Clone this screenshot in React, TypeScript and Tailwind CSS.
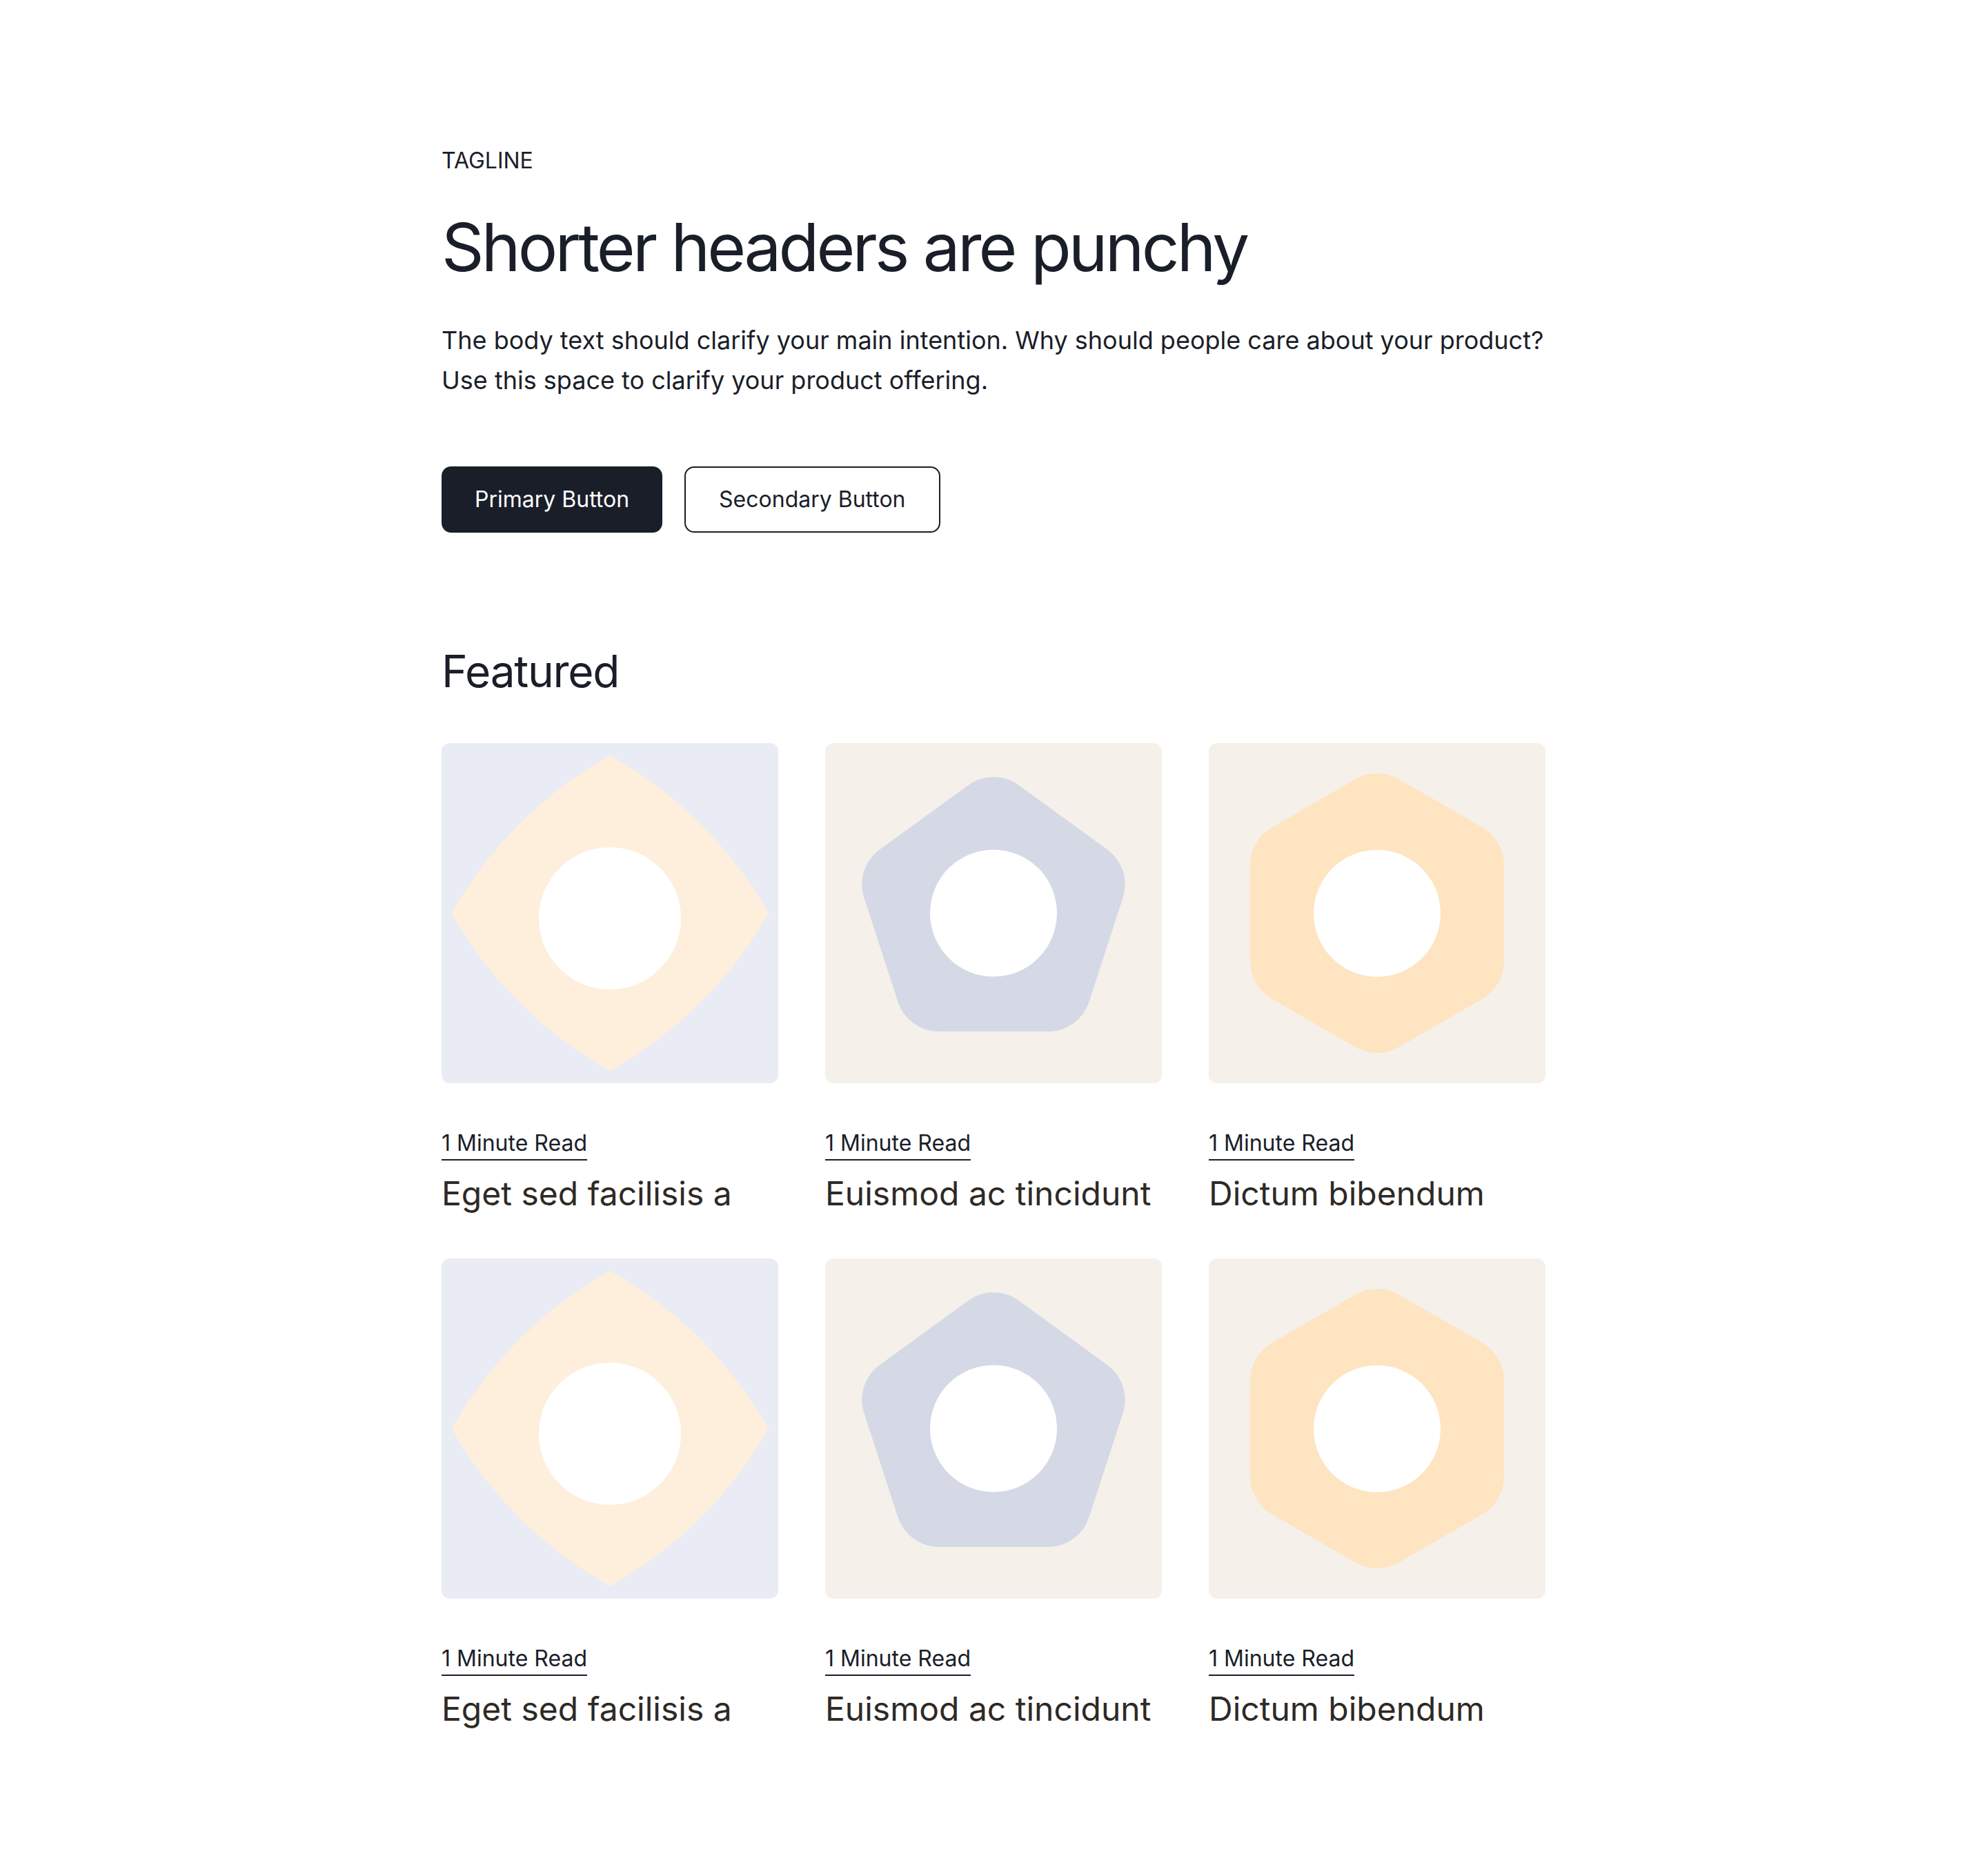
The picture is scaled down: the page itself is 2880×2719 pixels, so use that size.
import React from 'react';

type Pt = [number, number];

// rounded regular polygon, vertices clockwise from the top
function roundedPolygon(cx: number, cy: number, R: number, n: number, r: number) {
  const pts: Pt[] = Array.from({ length: n }, (_, i) => {
    const a = ((-90 + (i * 360) / n) * Math.PI) / 180;
    return [cx + R * Math.cos(a), cy + R * Math.sin(a)];
  });
  const half = (((n - 2) * 180) / n / 2) * (Math.PI / 180);
  const t = r / Math.tan(half);
  let d = '';
  pts.forEach((p, i) => {
    const prev = pts[(i - 1 + n) % n];
    const next = pts[(i + 1) % n];
    const toward = (q: Pt): Pt => {
      const dx = q[0] - p[0];
      const dy = q[1] - p[1];
      const len = Math.hypot(dx, dy);
      return [p[0] + (dx / len) * t, p[1] + (dy / len) * t];
    };
    const a = toward(prev);
    const b = toward(next);
    d += `${i === 0 ? 'M' : 'L'}${a[0].toFixed(2)} ${a[1].toFixed(2)} A${r} ${r} 0 0 1 ${b[0].toFixed(2)} ${b[1].toFixed(2)} `;
  });
  return d + 'Z';
}

const lensPath =
  'M244 18 A600 600 0 0 1 474 246.5 A600 600 0 0 1 244 475 A600 600 0 0 1 14.5 246.5 A600 600 0 0 1 244 18 Z';

function LensArt() {
  return (
    <div className="h-[493px] rounded-xl bg-[#e9ebf5] overflow-hidden">
      <svg viewBox="0 0 488 493" className="w-full h-full block">
        <path d={lensPath} fill="#feefdc" />
        <circle cx="244" cy="254" r="103" fill="#ffffff" />
      </svg>
    </div>
  );
}

function PentagonArt() {
  return (
    <div className="h-[493px] rounded-xl bg-[#f5f0ea] overflow-hidden">
      <svg viewBox="0 0 488 493" className="w-full h-full block">
        <path d={roundedPolygon(244, 246.4, 212, 5, 62)} fill="#d5d9e6" />
        <circle cx="244" cy="246.4" r="92" fill="#ffffff" />
      </svg>
    </div>
  );
}

function HexagonArt() {
  return (
    <div className="h-[493px] rounded-xl bg-[#f5f0ea] overflow-hidden">
      <svg viewBox="0 0 488 493" className="w-full h-full block">
        <path d={roundedPolygon(244, 246.5, 212.3, 6, 63)} fill="#fee4c0" />
        <circle cx="244" cy="246.8" r="92" fill="#ffffff" />
      </svg>
    </div>
  );
}

const posts = [
  { art: <LensArt />, title: 'Eget sed facilisis a' },
  { art: <PentagonArt />, title: 'Euismod ac tincidunt' },
  { art: <HexagonArt />, title: 'Dictum bibendum' },
];

function PostCard({ art, title }: { art: React.ReactNode; title: string }) {
  return (
    <div className="flex flex-col items-start">
      <div className="w-full">{art}</div>
      <span className="mt-[67px] pb-[3px] border-b-2 border-[#1a1e29] text-[32px] leading-[40px] text-[#1a1e29]">
        1 Minute Read
      </span>
      <h3 className="mt-[19px] text-[48px] leading-[58px] text-[#2e2a25]">{title}</h3>
    </div>
  );
}

export default function App() {
  return (
    <div className="bg-white font-['Inter','Noto_Sans',sans-serif] pt-[209px] pb-[212px]">
      <div className="w-[1600px] mx-auto">
        <p className="text-[32px] leading-[48px] text-[#1a1e29]">TAGLINE</p>
        <h1 className="mt-[44px] text-[96px] leading-[115px] tracking-[-0.04em] text-[#1a1e29]">
          Shorter headers are punchy
        </h1>
        <p className="mt-[49px] text-[36px] leading-[57.6px] text-[#1a1e29]">
          The body text should clarify your main intention. Why should people care about your product?
          <br />
          Use this space to clarify your product offering.
        </p>
        <div className="mt-[96px] flex gap-8">
          <button className="h-24 px-12 rounded-[14px] bg-[#1a1e29] text-white text-[32px]">Primary Button</button>
          <button className="h-24 px-12 rounded-[14px] border-2 border-[#1a1e29] bg-white text-[#1a1e29] text-[32px]">
            Secondary Button
          </button>
        </div>

        <h2 className="mt-[161px] text-[64px] leading-[80px] tracking-[-0.02em] text-[#1a1e29]">Featured</h2>
        <div className="mt-16 grid grid-cols-3 gap-x-[68px] gap-y-[65px]">
          {[...posts, ...posts].map((p, i) => (
            <PostCard key={i} art={p.art} title={p.title} />
          ))}
        </div>
      </div>
    </div>
  );
}
